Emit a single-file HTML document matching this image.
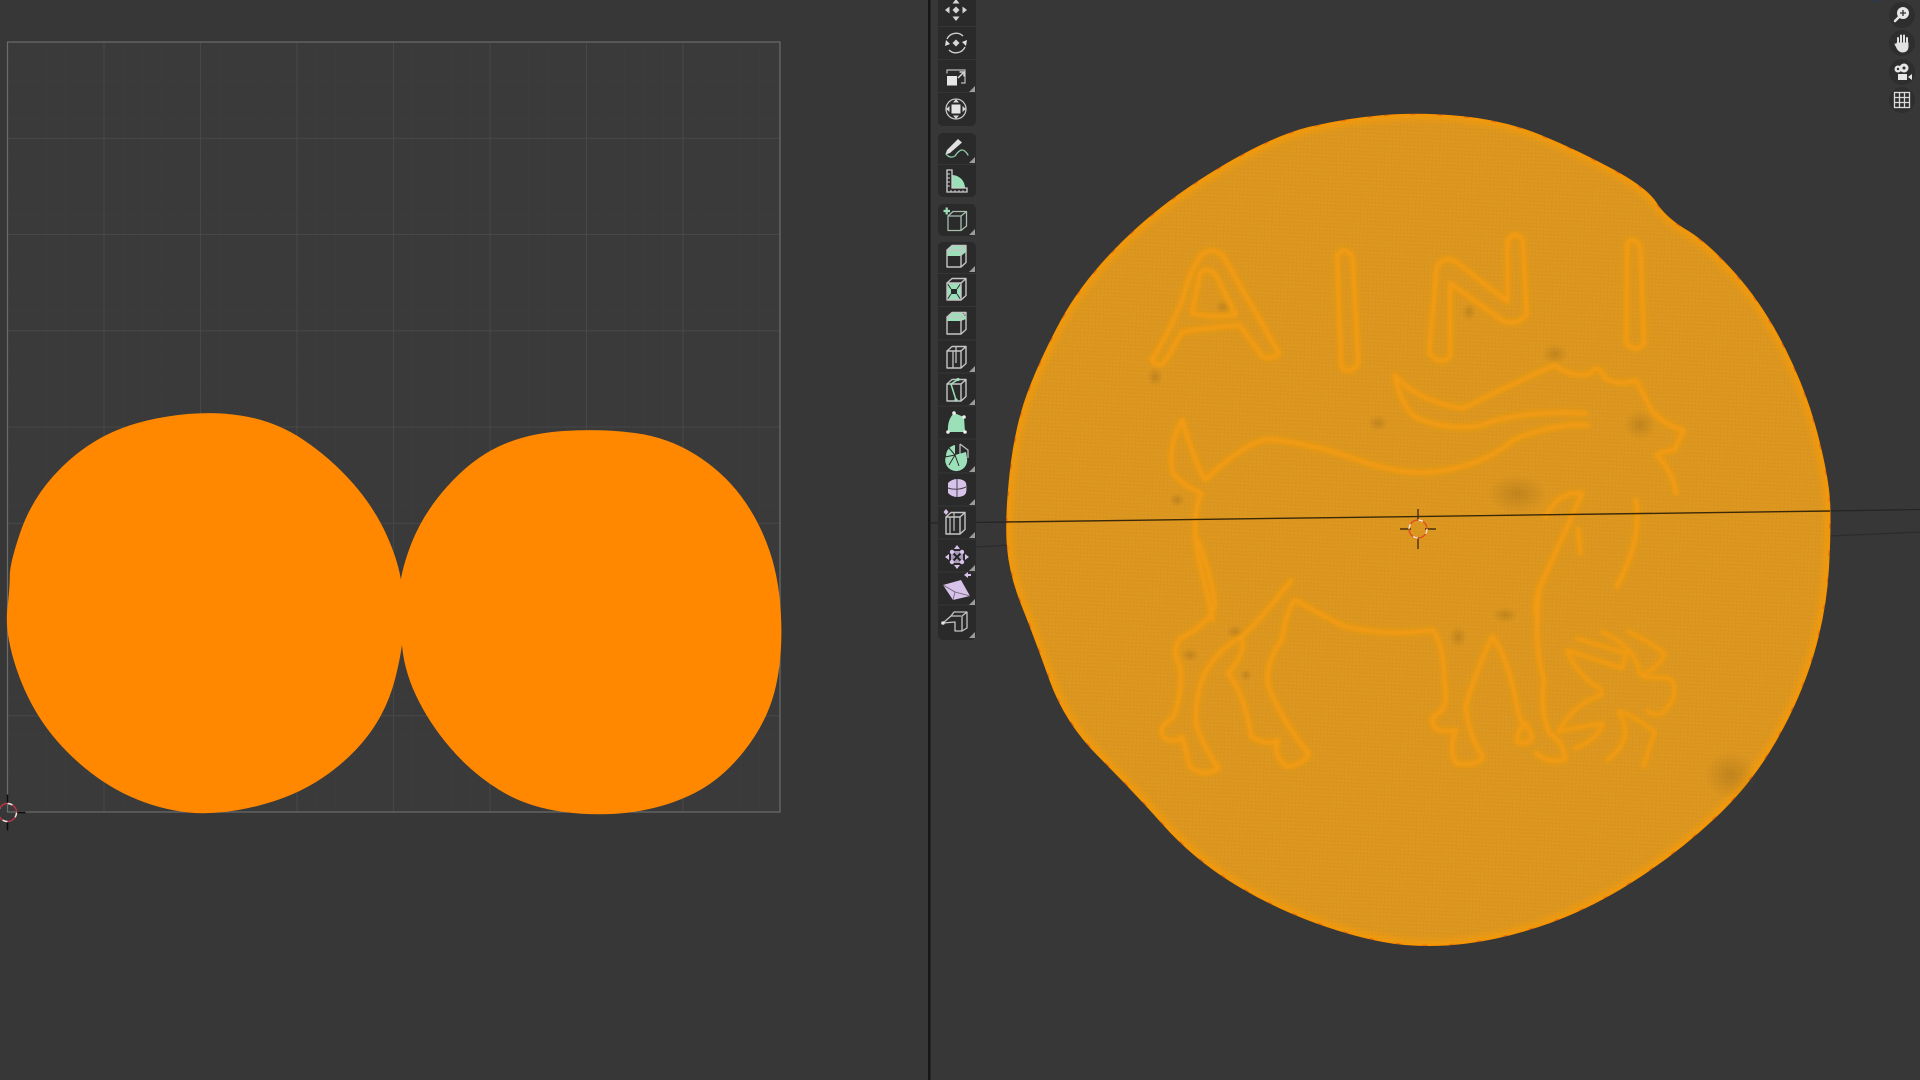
<!DOCTYPE html>
<html lang="en">
<head>
<meta charset="utf-8">
<title>UV Editor and 3D Viewport</title>
<style>
html,body{margin:0;padding:0;width:1920px;height:1080px;overflow:hidden;background:#373737}
svg{display:block;position:absolute;left:0;top:0}
</style>
</head>
<body>
<svg width="1920" height="1080" viewBox="0 0 1920 1080" xmlns="http://www.w3.org/2000/svg">
<defs>
  <pattern id="mesh" width="3" height="3" patternUnits="userSpaceOnUse" patternTransform="rotate(2)">
    <rect width="3" height="3" fill="#de981f"/>
    <path d="M0 .5H3M.5 0V3" stroke="#c98a22" stroke-width=".6" opacity=".35"/>
  </pattern>
  <path id="coinP" d="M1130,94.500Q1160,92 1195,95.500Q1230,99 1260,111.500Q1290,124 1317.500,139Q1345,154 1352.500,166Q1360,178 1377.500,188.500Q1395,199 1417.500,224.500Q1440,250 1457.500,285Q1475,320 1484,355Q1493,390 1494,410Q1495,430 1493,465Q1491,500 1480.500,535Q1470,570 1450,605Q1430,640 1400,668Q1370,696 1335,718.500Q1300,741 1265,753.500Q1230,766 1197.500,770Q1165,774 1137.500,770Q1110,766 1075,753.500Q1040,741 1007.500,721Q975,701 950,673Q925,645 897.500,617.500Q870,590 857.500,555Q845,520 835,495Q825,470 823,447.500Q821,425 825,387.500Q829,350 839,322.500Q849,295 866.500,262.500Q884,230 917,197.500Q950,165 995,138Q1040,111 1070,104Q1100,97 1130,94.500Z"/>
  <clipPath id="coinClip"><use href="#coinP"/></clipPath>
  <filter id="glow" x="-5%" y="-5%" width="110%" height="110%">
    <feGaussianBlur in="SourceGraphic" stdDeviation="3" result="w"/>
    <feGaussianBlur in="SourceGraphic" stdDeviation="1.200" result="n"/>
    <feMerge><feMergeNode in="w"/><feMergeNode in="n"/></feMerge>
  </filter>
  <filter id="b3" x="-5%" y="-5%" width="110%" height="110%"><feGaussianBlur stdDeviation="3"/></filter>
  <radialGradient id="spot"><stop offset="0" stop-color="#7a5518" stop-opacity=".28"/><stop offset="1" stop-color="#7a5518" stop-opacity="0"/></radialGradient>
  <pattern id="sub" width="19.28" height="19.25" patternUnits="userSpaceOnUse" x="7.5" y="42">
    <path d="M0 0H19.28M0 0V19.25" stroke="#3d3d3d" stroke-width="1" fill="none"/>
  </pattern>
  <g id="cube" fill="none" stroke="#c4c4c4" stroke-width="1.400" stroke-linejoin="round">
    <path d="M-10,-6H4V11H-10Z"/><path d="M-10,-6L-5,-10.500H9V6.500L4,11M4,-6L9,-10.500"/>
  </g>
  <path id="tri" d="M-3,3H3V-3Z" fill="#9c9c9c"/>
</defs>

<!-- Background -->
<rect width="1920" height="1080" fill="#373737"/>

<!-- UV grid -->
<rect x="7.500" y="42" width="772.500" height="770" fill="#3a3a3a"/>
<rect x="7.500" y="42" width="772.500" height="770" fill="url(#sub)"/>
<g stroke="#474747" stroke-width="1.100" fill="none">
  <path d="M104,42V812M200.500,42V812M297,42V812M393.500,42V812M490,42V812M586.500,42V812M683,42V812"/>
  <path d="M7.500,138.300H780M7.500,234.500H780M7.500,330.800H780M7.500,427H780M7.500,523.300H780M7.500,619.500H780M7.500,715.800H780"/>
</g>
<rect x="7.500" y="42" width="772.500" height="770" fill="none" stroke="#6c6c6c" stroke-width="1.200"/>

<!-- UV islands -->
<g transform="scale(1.22449)" fill="#ff8800">
  <path d="M137.500,340Q170,335 197.500,339.500Q225,344 247.500,359Q270,374 288,394.500Q306,415 316,437.500Q326,460 328,477.500Q330,495 329.500,512.500Q329,530 322.500,555Q316,580 301,600Q286,620 263,635.500Q240,651 209,658.500Q178,666 154,663.500Q130,661 107.500,651Q85,641 65,623.500Q45,606 32,585.500Q19,565 11.500,540Q4,515 6,497.500Q8,480 8,470Q8,460 16.500,435Q25,410 42.500,390Q60,370 82.500,357.500Q105,345 137.500,340Z"/>
  <path d="M460,352Q490,350 517.500,353.500Q545,357 567.500,371Q590,385 605,405Q620,425 628.500,450Q637,475 638,507.500Q639,540 632.500,565Q626,590 608,613Q590,636 567.500,647.500Q545,659 517.500,663Q490,667 460,663Q430,659 407.500,645Q385,631 367.500,610.500Q350,590 339.500,567.500Q329,545 328,522.500Q327,500 326.500,485Q326,470 335.500,445Q345,420 365,397.500Q385,375 407.500,364.500Q430,354 460,352Z"/>
</g>

<!-- UV cursor -->
<g transform="translate(7.500,812.500)">
  <path d="M-18,0H-8M8,0H18M0,-18V-8M0,8V18" stroke="#0c0c0c" stroke-width="1.500"/>
  <circle r="9" fill="none" stroke="#b83545" stroke-width="1.500"/>
  <circle r="9" fill="none" stroke="#e8e8e8" stroke-width="1.500" stroke-dasharray="5 9.100"/>
</g>

<!-- Divider -->
<rect x="928" y="0" width="2.500" height="1080" fill="#161616"/>

<!-- Object lines behind coin -->
<path d="M930,523L1010,522M1825,511L1920,509.500" stroke="#242424" stroke-width="1.300" fill="none"/>
<path d="M1830,536L1920,532M976,547L1010,545" stroke="#2b2b2b" stroke-width="1.200" fill="none"/>

<!-- Coin -->
<g transform="scale(1.22449)">
  <use href="#coinP" fill="#de981f"/>
  <g clip-path="url(#coinClip)">
    <rect x="800" y="80" width="720" height="710" fill="url(#mesh)"/>
    <use href="#coinP" fill="none" stroke="#ff9c05" stroke-width="7" filter="url(#b3)" opacity=".7"/>
  </g>
  <use href="#coinP" fill="none" stroke="#f79400" stroke-width="1.200"/>
  <use href="#coinP" fill="none" stroke="#e85a10" stroke-width=".9" stroke-dasharray="4 18" opacity=".7"/>
</g>

<!-- Mesh pinch points -->
<g fill="url(#spot)">
  <ellipse cx="1517" cy="494" rx="30" ry="20"/>
  <ellipse cx="1555" cy="354" rx="13" ry="10"/>
  <ellipse cx="1640" cy="425" rx="16" ry="15"/>
  <ellipse cx="1378" cy="423" rx="10" ry="8"/>
  <ellipse cx="1223" cy="307" rx="8" ry="7"/>
  <ellipse cx="1469" cy="312" rx="7" ry="9"/>
  <ellipse cx="1155" cy="377" rx="8" ry="10"/>
  <ellipse cx="1177" cy="500" rx="8" ry="7"/>
  <ellipse cx="1505" cy="615" rx="13" ry="8"/>
  <ellipse cx="1458" cy="637" rx="9" ry="11"/>
  <ellipse cx="1246" cy="675" rx="6" ry="6"/>
  <ellipse cx="1235" cy="632" rx="9" ry="7"/>
  <ellipse cx="1190" cy="655" rx="9" ry="7"/>
  <ellipse cx="1730" cy="775" rx="26" ry="24"/>
</g>

<!-- Relief lines -->
<g fill="none" stroke="#f29b12" stroke-linejoin="round" stroke-linecap="round" filter="url(#glow)">
  <g transform="translate(1100,220) scale(.38265,.33333)">
    <g stroke-width="3.600">
      <path vector-effect="non-scaling-stroke" d="M135,420Q150,445 170,425L215,335Q280,325 365,315L425,410Q450,420 468,400L320,105Q290,80 265,105Q235,150 215,240Q180,340 135,420Z"/>
      <path vector-effect="non-scaling-stroke" d="M240,280L262,160Q285,135 305,170L355,285Q300,295 240,280Z"/>
      <path vector-effect="non-scaling-stroke" d="M620,105Q640,75 660,110L675,430Q650,470 630,440Z"/>
      <path vector-effect="non-scaling-stroke" d="M860,400Q890,440 915,410L915,190L1050,300Q1085,320 1115,285L1105,60Q1080,25 1065,65L1065,245L930,125Q900,105 880,140Z"/>
      <path vector-effect="non-scaling-stroke" d="M1378,70Q1395,45 1412,80L1422,370Q1400,400 1375,370Z"/>
      <path vector-effect="non-scaling-stroke" d="M770,465Q830,545 950,565Q1060,500 1190,435Q1220,470 1280,462Q1300,425 1320,475Q1360,500 1400,480Q1420,520 1440,570Q1480,620 1525,630Q1510,670 1500,690Q1465,695 1455,705Q1500,760 1505,820"/>
      <path vector-effect="non-scaling-stroke" d="M770,465Q790,570 830,595Q920,635 1000,615Q1100,570 1270,580"/>
      <path vector-effect="non-scaling-stroke" d="M1275,615Q1180,610 1080,660Q1000,740 870,755Q800,765 700,730Q560,670 440,658Q380,665 275,780Q245,720 215,600Q175,680 190,760Q220,800 265,820Q235,900 260,1030Q280,1120 295,1200"/>
      <path vector-effect="non-scaling-stroke" d="M1165,890Q1200,810 1260,820Q1190,1000 1150,1100Q1130,1160 1145,1200"/>
      <path vector-effect="non-scaling-stroke" d="M1400,840Q1420,950 1350,1100"/>
      <path vector-effect="non-scaling-stroke" d="M1250,925L1255,1000"/>
    </g>
  </g>
  <g transform="translate(1100,540) scale(.38265,.33333)">
    <path vector-effect="non-scaling-stroke" stroke-width="3.600" d="M255,0Q290,100 300,190Q290,250 210,295Q185,330 210,380Q215,470 190,535Q150,560 165,590Q190,615 215,590L235,680Q270,715 310,685Q270,620 250,550Q250,430 290,370Q320,320 370,290Q420,240 500,120"/>
    <path vector-effect="non-scaling-stroke" stroke-width="3.600" d="M370,300Q385,330 335,400Q380,470 395,590Q440,620 465,600Q450,650 490,680Q540,670 545,640Q480,550 440,440Q430,370 475,300Q490,200 510,180Q570,220 640,260Q760,290 870,270Q900,320 900,430Q915,510 870,530Q860,585 930,570Q910,630 930,670Q990,680 1000,650Q965,590 955,500Q980,400 1025,290Q1060,340 1085,470Q1095,550 1110,555Q1090,570 1090,605Q1120,620 1130,590Q1120,560 1110,550"/>
    <path vector-effect="non-scaling-stroke" stroke-width="3.600" d="M1205,0Q1165,100 1150,140Q1130,300 1160,420Q1150,520 1175,580Q1215,610 1215,660Q1170,670 1140,640"/>
    <g stroke-width="2.800">
      <path vector-effect="non-scaling-stroke" d="M1220,330Q1240,390 1285,430Q1320,450 1310,465Q1240,490 1200,570"/>
      <path vector-effect="non-scaling-stroke" d="M1220,330L1365,385L1375,340L1245,295"/>
      <path vector-effect="non-scaling-stroke" d="M1310,275Q1400,320 1410,400L1420,405Q1470,370 1475,340Q1430,300 1380,275"/>
      <path vector-effect="non-scaling-stroke" d="M1420,410L1490,415Q1520,460 1470,520Q1440,530 1430,510"/>
      <path vector-effect="non-scaling-stroke" d="M1240,625Q1300,600 1315,550Q1250,560 1200,575"/>
      <path vector-effect="non-scaling-stroke" d="M1325,660Q1400,600 1355,515Q1370,510 1450,575L1420,680"/>
    </g>
  </g>
</g>

<!-- Object line over coin -->
<path d="M1006,522L1830,511" stroke="#3a2808" stroke-width="1.400" fill="none"/>

<!-- 3D cursor -->
<g transform="translate(1418,529)">
  <path d="M-18,0H-7M7,0H18M0,-20V-8M0,8V20" stroke="#4a300a" stroke-width="1.400"/>
  <circle r="9" fill="none" stroke="#e04a20" stroke-width="1.300"/>
  <circle r="9" fill="none" stroke="#f5f0e0" stroke-width="1.300" stroke-dasharray="5 9.100"/>
</g>

<!-- Toolbar -->
<g fill="#2a2a2a">
  <rect x="938" y="-10" width="38" height="136" rx="5"/>
  <rect x="938" y="133" width="38" height="64" rx="5"/>
  <rect x="938" y="204" width="38" height="32" rx="5"/>
  <rect x="938" y="242" width="38" height="398" rx="5"/>
</g>
<path d="M938,26.500H976M938,59.500H976M938,92.500H976M938,164.500H976M938,273.500H976M938,306.500H976M938,340H976M938,373H976M938,406H976M938,439H976M938,473H976M938,506H976M938,539H976M938,572H976M938,605H976" stroke="#353535" stroke-width="1"/>

<!-- Move -->
<g transform="translate(956,10)" fill="#d6d6d6">
  <path d="M0,-3.500L3.500,0L0,3.500L-3.500,0Z"/>
  <path d="M0,-11L-3.500,-6.500H3.500ZM0,11L-3.500,6.500H3.500ZM-11,0L-6.500,-3.500V3.500ZM11,0L6.500,-3.500V3.500Z"/>
</g>
<!-- Rotate -->
<g transform="translate(956,43)">
  <path d="M-9,-4A10,10 0 0 1 7,-7M9,4A10,10 0 0 1 -7,7" fill="none" stroke="#d0d0d0" stroke-width="1.400"/>
  <path d="M-3.500,0L0,-3.500L3.500,0L0,3.500Z" fill="#d6d6d6"/>
  <path d="M-11,3L-10,-3L-6,1ZM11,-3L10,3L6,-1Z" fill="#e0e0e0"/>
</g>
<!-- Scale -->
<g transform="translate(957,80)">
  <rect x="-10" y="-4" width="10" height="9.500" fill="#e6e6e6"/>
  <path d="M-10,-6.500V-10H8V3H4" fill="none" stroke="#bcbcbc" stroke-width="1.200"/>
  <path d="M1,-2L6,-7M2.500,-8H7V-3.500" fill="none" stroke="#d6d6d6" stroke-width="1.500"/>
  <use href="#tri" x="15" y="9"/>
</g>
<!-- Transform -->
<g transform="translate(956,109)">
  <circle r="10" fill="none" stroke="#c8c8c8" stroke-width="1.300"/>
  <rect x="-4.500" y="-4.500" width="9" height="9" fill="#e4e4e4"/>
  <path d="M0,-10L-3,-6.500H3ZM0,10L-3,6.500H3ZM-10,0L-6.500,-3V3ZM10,0L6.500,-3V3Z" fill="#d6d6d6"/>
</g>

<!-- Annotate -->
<path d="M958,139L962,142.500L950,153L945.500,154.500L947,150Z" fill="#e0e0e0"/>
<path d="M946,154Q950,159 955,156Q959,150 962,150Q965,150 968,155" fill="none" stroke="#8fd3ac" stroke-width="1.300" stroke-linecap="round"/>
<use href="#tri" x="972" y="160"/>
<!-- Measure -->
<path d="M952,188A13,13 0 0 1 965,188H952V175A13,13 0 0 1 965,188Z" fill="#9ce0ba"/>
<path d="M947,170H952V188H967V192H947Z" fill="none" stroke="#cfcfcf" stroke-width="1.300"/>
<path d="M947,174H950M947,178H950M947,182H950M947,186H950M951,190V192M955,190V192M959,190V192M963,190V192" stroke="#cfcfcf" stroke-width="1"/>
<!-- Add cube -->
<g transform="translate(957.500,221)">
  <g fill="none" stroke="#a6bdb0" stroke-width="1.300" stroke-linejoin="round">
    <path d="M-9.500,-5H3.500V9.500H-9.500Z"/><path d="M-9.500,-5L-4.500,-9.500H9V5L3.500,9.500M3.500,-5L9,-9.500"/>
  </g>
  <path d="M-14,-10H-7.500M-10.800,-13.500V-6.500" stroke="#9ce0ba" stroke-width="2.200"/>
  <use href="#tri" x="14.500" y="11"/>
</g>

<!-- Extrude -->
<g transform="translate(957,256)">
  <path d="M-10,0V-6L-5,-10.500H9V-4L4,0Z" fill="#9ce0ba"/>
  <use href="#cube"/>
  <use href="#tri" x="15" y="13"/>
</g>
<!-- Inset -->
<g transform="translate(957,289)">
  <rect x="-10" y="-6" width="14" height="17" fill="#9ce0ba"/>
  <rect x="-6" y="0" width="6" height="5" fill="#2a2a2a"/>
  <path d="M-6,0L-10,-6M0,0L4,-6M0,5L4,11M-6,5L-10,11" stroke="#2a2a2a" stroke-width="1"/>
  <use href="#cube"/>
</g>
<!-- Bevel -->
<g transform="translate(957,323)">
  <path d="M-10,-2V-5L-5,-10.500H5L9,-6V-4L4,-2Z" fill="#9ce0ba"/>
  <use href="#cube"/>
</g>
<!-- Loop cut -->
<g transform="translate(957,357)">
  <use href="#cube"/>
  <path d="M-4,-6V11M-1,-10.500V6" stroke="#c4c4c4" stroke-width="1.300" fill="none"/>
  <use href="#tri" x="15" y="12"/>
</g>
<!-- Knife -->
<g transform="translate(957,390)">
  <use href="#cube"/>
  <path d="M-6,-6L-1,10M-6,-6L1,-10.500" stroke="#9ce0ba" stroke-width="1.500" fill="none"/>
  <circle cx="-1" cy="10" r="1.600" fill="#9ce0ba"/><circle cx="1" cy="-10.500" r="1.600" fill="#9ce0ba"/>
  <use href="#tri" x="15" y="12"/>
</g>
<!-- Poly build -->
<g transform="translate(957,423)">
  <path d="M-3,-10L7,-6L8,9L-9,9Q-10,-3 -3,-10Z" fill="#9ce0ba"/>
  <g fill="#ededed"><circle cx="-3" cy="-10" r="1.800"/><circle cx="7" cy="-6" r="1.800"/><circle cx="8" cy="9" r="1.800"/><circle cx="-9" cy="9" r="1.800"/></g>
</g>
<!-- Spin -->
<g transform="translate(957,455)">
  <path d="M-2,-10L-2,0L9,-3L10,3A11,11 0 1 1 -11,1A11,11 0 0 1 -2,-10Z" fill="#9ce0ba"/>
  <path d="M-2,0L-8,10M-2,0L2,11M-2,0L-12,2M-2,0L-8,-7" stroke="#2a2a2a" stroke-width="1"/>
  <path d="M3,-11V-1M3,-11L11,-5V3" fill="none" stroke="#c4c4c4" stroke-width="1.200"/>
  <use href="#tri" x="15" y="14"/>
</g>
<!-- Smooth -->
<g transform="translate(957,488)">
  <path d="M-9,-5Q-5,-9 0,-9Q7,-9 9,-5Q10,0 9,5Q7,9 0,9Q-5,9 -9,5Z" fill="#d7c2ea"/>
  <path d="M-9,0Q0,3 9,-1M0,-9V9" stroke="#4a4050" stroke-width="1" fill="none"/>
  <use href="#tri" x="15" y="14"/>
</g>
<!-- Shrink -->
<g transform="translate(956,523)">
  <use href="#cube"/>
  <path d="M-6,-6V11M-2,-10V8" stroke="#c4c4c4" stroke-width="1.200" fill="none"/>
  <path d="M-10,-14L-7.500,-11L-10,-8L-12.500,-11Z" fill="#d7c2ea"/>
  <use href="#tri" x="16" y="12"/>
</g>
<!-- Push -->
<g transform="translate(957,557)">
  <rect x="-6" y="-6" width="12" height="12" fill="#a89ab6"/>
  <path d="M-6,-6L6,6M6,-6L-6,6" stroke="#222" stroke-width="2"/>
  <g fill="#d7c2ea"><circle cx="-5" cy="-5" r="2.200"/><circle cx="5" cy="-5" r="2.200"/><circle cx="-5" cy="5" r="2.200"/><circle cx="5" cy="5" r="2.200"/></g>
  <path d="M0,-12L-3,-8H3ZM0,12L-3,8H3ZM-12,0L-8,-3V3ZM12,0L8,-3V3Z" fill="#d7c2ea"/>
  <use href="#tri" x="15" y="11"/>
</g>
<!-- Shear -->
<path d="M943,585L961,580L970,596L953,600Z" fill="#d7c2ea"/>
<path d="M943,585L955,592L953,600M955,592L970,596" stroke="#6a5f72" stroke-width=".8" fill="none"/>
<path d="M964,575L968,572V574H971V576H968V578Z" fill="#d7c2ea"/>
<use href="#tri" x="972" y="602"/>
<!-- Rip -->
<g transform="translate(957,622)">
  <g fill="none" stroke="#c4c4c4" stroke-width="1.300" stroke-linejoin="round">
    <path d="M-14,1L-6,-6H4M-14,1L-2,0V9H5V-6L10,-10H-3L-6,-6M5,9L10,6V-10"/>
  </g>
  <circle cx="-14" cy="1" r="1.800" fill="#e4e4e4"/>
  <use href="#tri" x="15" y="13"/>
</g>

<!-- Viewport nav gizmos -->
<ellipse cx="1875" cy="0" rx="5" ry="3" fill="#2f3a46"/>
<g fill="#2e2e2e">
  <circle cx="1902" cy="15" r="13"/>
  <circle cx="1902" cy="43" r="13"/>
  <circle cx="1902" cy="72" r="13"/>
  <circle cx="1902" cy="100" r="13"/>
</g>
<g transform="translate(1902,15)">
  <circle cx="1" cy="-2" r="6" fill="#e6e6e6"/>
  <path d="M-3,2L-7,6" stroke="#e6e6e6" stroke-width="2.500" stroke-linecap="round"/>
  <path d="M-2,-2H4M1,-5V1" stroke="#2e2e2e" stroke-width="1.300"/>
</g>
<g transform="translate(1902.500,44)" fill="#e2e2e2" stroke="#e2e2e2" stroke-linecap="round">
  <path d="M-4.500,-1V-6M-1.500,-2V-8.500M1.500,-2V-8.500M4.500,-1V-6" stroke-width="2" fill="none"/>
  <path d="M-5.500,-1H5.500V3Q5,8 0,8Q-3,8 -5,5L-7.500,0" stroke-width="1"/>
</g>
<g transform="translate(1902,72)" fill="#e6e6e6">
  <circle cx="-4" cy="-3" r="3.500"/><circle cx="2" cy="-4" r="4.500"/>
  <circle cx="-4" cy="-3" r="1.200" fill="#2e2e2e"/><circle cx="2" cy="-4" r="1.500" fill="#2e2e2e"/>
  <rect x="-4" y="2" width="9" height="6"/>
  <path d="M6,5L10,2V8Z"/>
</g>
<g transform="translate(1902,100)" fill="none" stroke="#dadada" stroke-width="1.300">
  <rect x="-7.500" y="-7.500" width="15" height="15"/>
  <path d="M-2.500,-7.500V7.500M2.500,-7.500V7.500M-7.500,-2.500H7.500M-7.500,2.500H7.500"/>
</g>
</svg>
</body>
</html>
